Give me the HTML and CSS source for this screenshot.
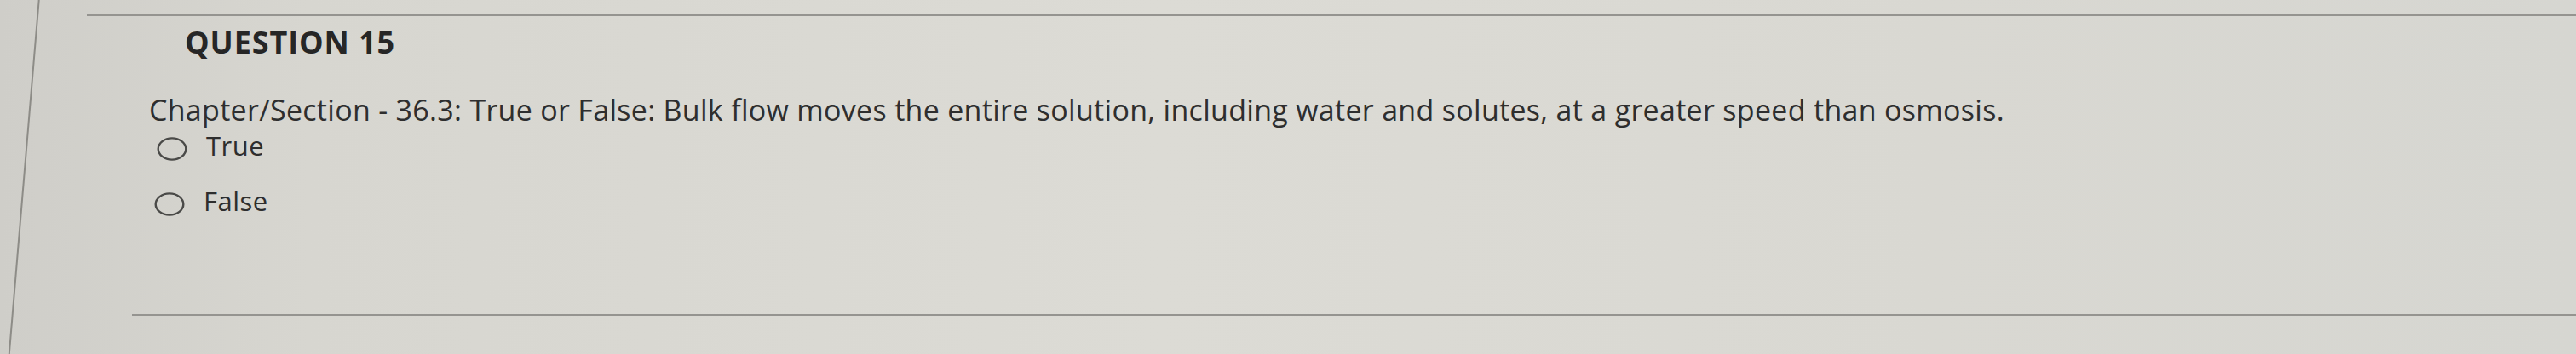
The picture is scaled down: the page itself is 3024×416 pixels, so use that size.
FILE: index.html
```html
<!DOCTYPE html>
<html lang="en">
<head>
<meta charset="utf-8">
<title>Question 15</title>
<link rel="stylesheet" href="styles.css">
</head>
<body>
<div class="screen">
  <div class="edge"></div>
  <div class="rule rule-top"></div>
  <section class="question">
    <h2 class="q-title">QUESTION 15</h2>
    <p class="q-text">Chapter/Section - 36.3: True or False: Bulk flow moves the entire solution, including water and solutes, at a greater speed than osmosis.</p>
    <ul class="options">
      <li class="option">
        <svg class="radio" width="36" height="28" viewBox="0 0 36 28"><ellipse cx="18" cy="14" rx="16.3" ry="12.6" fill="none" stroke="#4a4a48" stroke-width="2.4"/></svg>
        <span class="opt-label">True</span>
      </li>
      <li class="option option-2">
        <svg class="radio" width="36" height="28" viewBox="0 0 36 28"><ellipse cx="18" cy="14" rx="16.3" ry="12.6" fill="none" stroke="#4a4a48" stroke-width="2.4"/></svg>
        <span class="opt-label">False</span>
      </li>
    </ul>
  </section>
  <div class="rule rule-bottom"></div>
</div>
</body>
</html>
```

FILE: styles.css
```css
html, body {
  margin: 0;
  padding: 0;
}
body {
  width: 3024px;
  height: 416px;
  overflow: hidden;
  background: #d6d5cf;
  font-family: "Open Sans", "Liberation Sans", sans-serif;
}
.screen {
  position: relative;
  width: 3024px;
  height: 416px;
  display: flex;
  flex-direction: column;
  background: linear-gradient(90deg, #cfcec9 0%, #d7d6d0 12%, #dcdbd5 45%, #d9d8d2 75%, #d6d6d1 100%);
}
.edge {
  position: absolute;
  left: 27px;
  top: -4px;
  width: 2px;
  height: 430px;
  background: #8d8c87;
  transform: skewX(-4.8deg);
  transform-origin: 50% 50%;
}
.rule {
  height: 2px;
  background: #959490;
}
.rule-top {
  margin-top: 17px;
  margin-left: 102px;
}
.question {
  display: flex;
  flex-direction: column;
  padding-left: 217px;
  padding-top: 6px;
}
.q-title {
  margin: 0;
  font-size: 36px;
  font-weight: 700;
  line-height: 49px;
  color: #262626;
  letter-spacing: 0.9px;
}
.q-text {
  margin: 34px 0 0 -42px;
  font-size: 34px;
  line-height: 42px;
  color: #2e2e2e;
  letter-spacing: 0.3px;
}
.options {
  list-style: none;
  margin: -1px 0 0 -33px;
  padding: 0;
  display: flex;
  flex-direction: column;
  gap: 21px;
}
.option {
  display: flex;
  align-items: center;
  gap: 22px;
  height: 44px;
}
.option-2 {
  margin-left: -3px;
}
.radio {
  flex: none;
  margin-top: 8px;
}
.opt-label {
  font-size: 31px;
  line-height: 44px;
  color: #2e2e2e;
  letter-spacing: 0.5px;
}
.rule-bottom {
  margin-top: auto;
  margin-bottom: 45px;
  margin-left: 155px;
}
```
